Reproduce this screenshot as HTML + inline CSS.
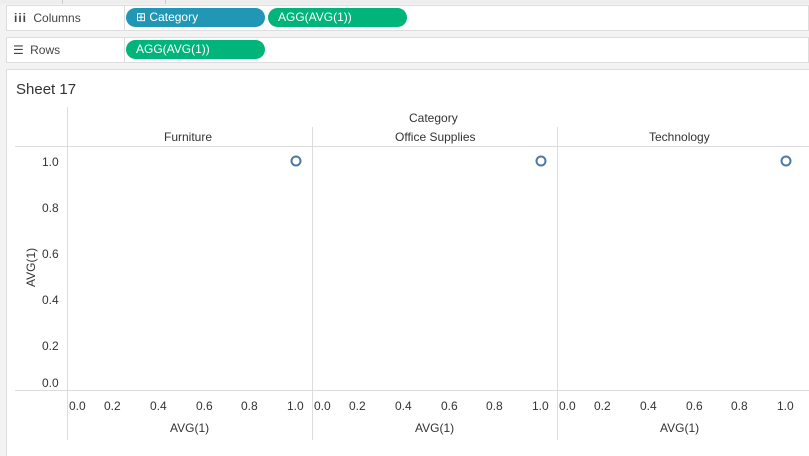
<!DOCTYPE html><html><head><style>
body{margin:0;width:809px;height:455px;background:#f3f3f3;font-family:"Liberation Sans",sans-serif;position:relative;overflow:hidden;color:#333}
.a{position:absolute}
.shelf{position:absolute;left:6px;width:803px;height:26px;background:#fff;border:1px solid #ddd;box-sizing:border-box}
.lab{position:absolute;left:0;top:0;width:117px;height:24px;border-right:1px solid #ddd;font-size:12px;line-height:24px;color:#444}
.pill{position:absolute;height:19px;border-radius:10px;color:#fff;font-size:12px;line-height:19px;box-sizing:border-box;padding-left:10px}
.t{position:absolute;font-size:12px;color:#333;white-space:nowrap}
</style></head><body>
<div class="a" style="left:0;top:0;width:809px;height:4px;background:#eee"></div>
<div class="a" style="left:62px;top:0;width:1px;height:4px;background:#ccc"></div>
<div class="a" style="left:165px;top:0;width:1px;height:4px;background:#ccc"></div>
<div class="shelf" style="top:5px"><div class="lab"><span style="font-weight:bold;margin-left:7px;letter-spacing:1px">iii</span> <span style="margin-left:3px">Columns</span></div></div>
<div class="pill" style="left:126px;top:8px;width:139px;background:#2296b5">⊞ Category</div>
<div class="pill" style="left:268px;top:8px;width:139px;background:#00b47a">AGG(AVG(1))</div>
<div class="shelf" style="top:37px"><div class="lab"><span style="margin-left:6px">☰</span> <span style="margin-left:3px">Rows</span></div></div>
<div class="pill" style="left:126px;top:40px;width:139px;background:#00b47a">AGG(AVG(1))</div>
<div class="a" style="left:6px;top:69px;width:803px;height:386px;background:#fff;border-left:1px solid #ddd;border-top:1px solid #ddd"></div>
<div class="t" style="left:16px;top:81px;font-size:15px;color:#333">Sheet 17</div>
<svg class="a" style="left:0;top:0" width="809" height="455">
<g stroke="#ddd" stroke-width="1">
<line x1="67.5" y1="107" x2="67.5" y2="440"/>
<line x1="312.5" y1="127" x2="312.5" y2="440"/>
<line x1="557.5" y1="127" x2="557.5" y2="440"/>
<line x1="15" y1="146.5" x2="809" y2="146.5"/>
<line x1="15" y1="390.5" x2="809" y2="390.5"/>
</g>
<g fill="none" stroke="#4e79a7" stroke-width="2">
<circle cx="296" cy="161" r="4.5"/><circle cx="541" cy="161" r="4.5"/><circle cx="786" cy="161" r="4.5"/>
</g>
</svg>
<div class="t" style="left:409px;top:111px">Category</div>
<div class="t" style="left:164px;top:130px">Furniture</div>
<div class="t" style="left:395px;top:130px">Office Supplies</div>
<div class="t" style="left:649px;top:130px">Technology</div>
<div class="t" style="left:42px;top:155px">1.0</div>
<div class="t" style="left:42px;top:201px">0.8</div>
<div class="t" style="left:42px;top:247px">0.6</div>
<div class="t" style="left:42px;top:293px">0.4</div>
<div class="t" style="left:42px;top:339px">0.2</div>
<div class="t" style="left:42px;top:376px">0.0</div>
<div class="t" style="left:24px;top:268px;transform:rotate(-90deg);transform-origin:0 0;top:287px">AVG(1)</div>
<div class="t" style="left:69px;top:399px;width:740px;word-spacing:0">
<span class="t" style="left:0">0.0</span><span class="t" style="left:35px">0.2</span><span class="t" style="left:81px">0.4</span><span class="t" style="left:127px">0.6</span><span class="t" style="left:172px">0.8</span><span class="t" style="left:218px">1.0</span>
<span class="t" style="left:245px">0.0</span><span class="t" style="left:280px">0.2</span><span class="t" style="left:326px">0.4</span><span class="t" style="left:372px">0.6</span><span class="t" style="left:417px">0.8</span><span class="t" style="left:463px">1.0</span>
<span class="t" style="left:490px">0.0</span><span class="t" style="left:525px">0.2</span><span class="t" style="left:571px">0.4</span><span class="t" style="left:617px">0.6</span><span class="t" style="left:662px">0.8</span><span class="t" style="left:708px">1.0</span>
</div>
<div class="t" style="left:170px;top:421px">AVG(1)</div>
<div class="t" style="left:415px;top:421px">AVG(1)</div>
<div class="t" style="left:660px;top:421px">AVG(1)</div>
</body></html>
